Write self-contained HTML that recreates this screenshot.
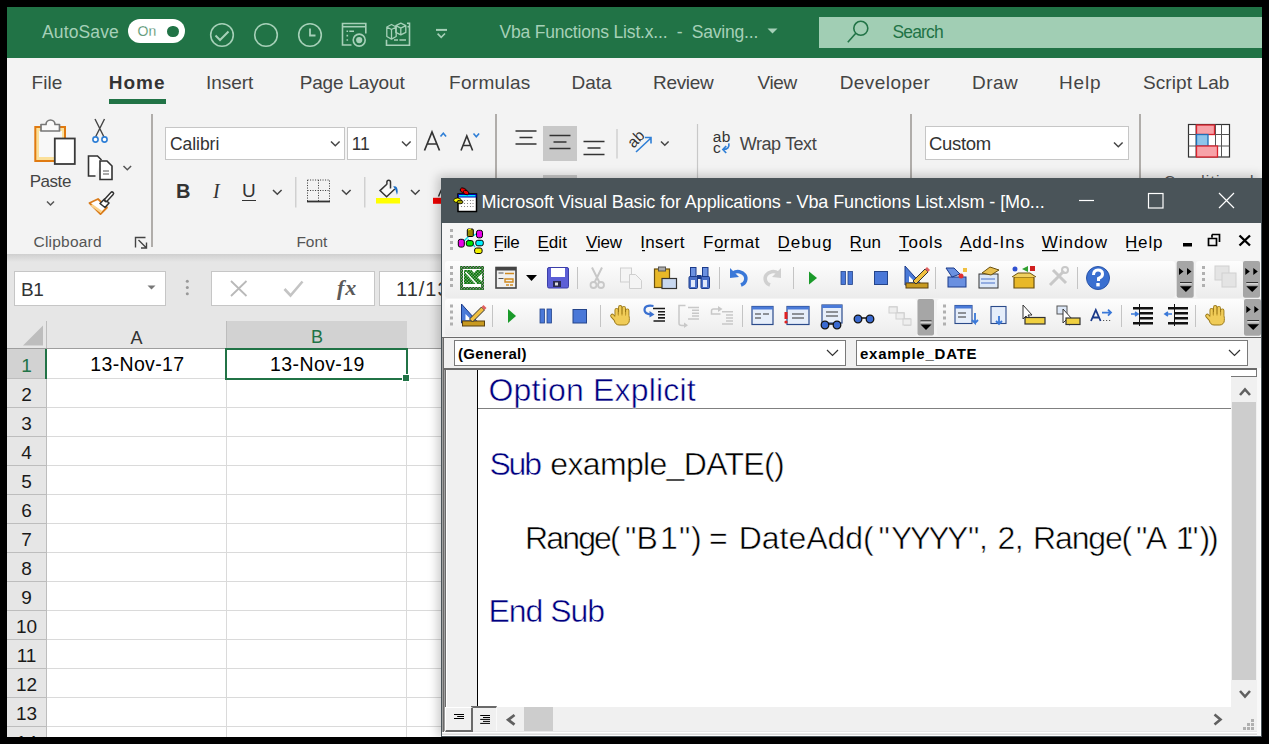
<!DOCTYPE html>
<html><head><meta charset="utf-8"><style>
html,body{margin:0;padding:0;}
body{width:1269px;height:744px;position:relative;overflow:hidden;background:#000;font-family:"Liberation Sans",sans-serif;}
.a{position:absolute;}
.t{position:absolute;white-space:pre;font-family:"Liberation Sans",sans-serif;}
svg{position:absolute;overflow:visible;}
</style></head><body>
<!-- Excel title bar -->
<div class="a" style="left:7px;top:7px;width:1255px;height:51px;background:#217346"></div>
<div class="a" style="left:128px;top:19px;width:57px;height:24px;border-radius:12px;background:#fff"></div>
<div class="a" style="left:167px;top:25.5px;width:11.5px;height:11.5px;border-radius:50%;background:#217346"></div>
<svg class="a" style="left:0;top:0" width="1269" height="60" fill="none" stroke="#a6d0b8" stroke-width="1.6">
  <circle cx="222" cy="35" r="11.3"/>
  <path d="M215.5 35.5 l4.5 4.5 l8.5 -8.5" stroke-width="2"/>
  <circle cx="266" cy="35" r="11.3"/>
  <circle cx="310" cy="35" r="11.3"/>
  <path d="M310 28.5 v7 h5.5" stroke-width="1.8"/>
  <!-- icon 4 -->
  <path d="M351.5 45 h-9 v-21.5 h23.3 v10"/>
  <path d="M342.5 26.7 h23.3"/>
  <path d="M346.5 31.2 h1.6 M346.5 35.6 h1.6 M346.5 40 h1.6 M349.3 31.2 h4.7" stroke-width="1.6"/>
  <circle cx="359.2" cy="40.1" r="6"/>
  <circle cx="359.2" cy="40.1" r="3.1" fill="#a6d0b8" stroke="none"/>
  <!-- icon 5 -->
  <path d="M386.5 39.8 v5.5 h23 v-22 h-2.5 M407.5 26.8 h2"/>
  <path d="M386.8 27 l4.7 -2.5 l4.7 2.5 v9.5 l-4.7 2.6 l-4.7 -2.6 z M391.5 29.5 v9.6 M386.8 27 l4.7 2.5 l4.7 -2.5" stroke-width="1.3" stroke-linejoin="round"/>
  <path d="M395.8 25.7 l5 -2.5 l5 2.5 v6.7 l-5 2.4 l-5 -2.4 z M400.8 28.2 v6.6 M395.8 25.7 l5 2.5 l5 -2.5" stroke-width="1.3" stroke-linejoin="round"/>
  <path d="M394 40 h4 M399.4 40 h6.6" stroke-width="1.4"/>
  <!-- customize qat -->
  <path d="M436 29.9 h11" stroke-width="2"/>
  <path d="M437.6 33.6 l3.6 3.8 l3.8 -3.9" stroke-width="1.6"/>
</svg>
<svg class="a" style="left:0;top:0" width="1269" height="60">
  <path d="M767.5 28.5 h10 l-5 5 z" fill="#a6d0b8"/>
</svg>
<div class="a" style="left:819px;top:17px;width:443px;height:31px;background:#a1ceb4"></div>
<svg class="a" style="left:0;top:0" width="1269" height="60" fill="none" stroke="#217346" stroke-width="1.6">
  <circle cx="860.8" cy="28.3" r="7"/>
  <path d="M855.8 33.3 l-8 9"/>
</svg>
<div class="a" style="left:1250px;top:17px;width:12px;height:6px;"></div>

<!-- Ribbon -->
<div class="a" style="left:7px;top:58px;width:1255px;height:196px;background:#f3f3f3"></div>
<div class="a" style="left:109px;top:99px;width:57px;height:4.5px;background:#217346"></div>
<!-- group separators -->
<div class="a" style="left:151px;top:114px;width:2px;height:133px;background:#b0adaa"></div>
<div class="a" style="left:494.8px;top:114px;width:2px;height:133px;background:#b0adaa"></div>
<div class="a" style="left:910px;top:114px;width:2px;height:133px;background:#b0adaa"></div>
<div class="a" style="left:1139.2px;top:114px;width:2px;height:133px;background:#b0adaa"></div>

<!-- clipboard icons -->
<svg class="a" style="left:0;top:100px" width="160" height="160" viewBox="0 100 160 160">
  <rect x="35.3" y="127" width="29.7" height="34" fill="#fbe09a" stroke="#e07a10" stroke-width="2"/>
  <rect x="39" y="131" width="23" height="26" fill="#f8f8f8"/>
  <path d="M41 131 v-6.5 h5 a4.5 4.5 0 0 1 9 0 h4.5 v6.5 z" fill="#fafafa" stroke="#777" stroke-width="1.7" stroke-linejoin="round"/>
  <rect x="54.8" y="138.5" width="20" height="25.5" fill="#fff" stroke="#3a3a3a" stroke-width="1.8"/>
  <path d="M47 201.5 l3.5 3.5 l3.5 -3.5" fill="none" stroke="#555" stroke-width="1.5"/>
  <!-- scissors -->
  <path d="M95 119 l9 18 M104.5 119 l-9 18" stroke="#444" stroke-width="1.4" fill="none"/>
  <circle cx="95.5" cy="139.5" r="2.6" fill="#fff" stroke="#2f7fd6" stroke-width="1.6"/>
  <circle cx="104.5" cy="139.5" r="2.6" fill="#fff" stroke="#2f7fd6" stroke-width="1.6"/>
  <!-- copy -->
  <path d="M95.5 176 h-7 v-20 h9 l4 4" fill="#fff" stroke="#333" stroke-width="1.6"/>
  <path d="M100 161 h7 l5 5 v13.5 h-12 z" fill="#fff" stroke="#333" stroke-width="1.6"/>
  <path d="M103 171 h6 M103 174 h6" stroke="#555" stroke-width="1"/>
  <path d="M123.5 166 l3.8 3.8 l3.8 -3.8" fill="none" stroke="#555" stroke-width="1.5"/>
  <!-- format painter -->
  <path d="M89.5 203 l8.5 -4 l9 8.5 l-6.5 6.5 z" fill="#fff" stroke="#d97b1a" stroke-width="1.8" stroke-linejoin="round"/>
  <path d="M93 206 l8.5 5.5 l-1 1.5 z" fill="#fbd28a" stroke="none"/>
  <path d="M91.5 205 l10 7" stroke="#fbd28a" stroke-width="2.5"/>
  <path d="M100 203.5 l4.5 -4.5 l4.5 4 l-4 4.5 z" fill="#fff" stroke="#333" stroke-width="1.6" stroke-linejoin="round"/>
  <path d="M106 200 l6 -6.5" stroke="#333" stroke-width="4.6" stroke-linecap="round"/>
  <path d="M106.3 199.7 l5.7 -6.2" stroke="#fff" stroke-width="1.6" stroke-linecap="round"/>
  <!-- launcher -->
  <path d="M135.5 247.5 v-10 h10 M138.5 240 l8 8 M141 248 h5.5 v-5.5" fill="none" stroke="#444" stroke-width="1.4"/>
</svg>

<!-- font group -->
<div class="a" style="left:165px;top:126.5px;width:178px;height:31.5px;background:#fff;border:1.5px solid #c6c6c6"></div>
<div class="a" style="left:346.5px;top:126.5px;width:68px;height:31.5px;background:#fff;border:1.5px solid #c6c6c6"></div>
<svg class="a" style="left:0;top:100px" width="500" height="160" viewBox="0 100 500 160" fill="none" stroke="#444" stroke-width="1.5">
  <path d="M331 141.5 l4.3 4.3 l4.3 -4.3"/>
  <path d="M402 141.5 l4.3 4.3 l4.3 -4.3"/>
  <path d="M424.5 150.5 l7.5 -18.5 l7.5 18.5 M427.5 144 h9" stroke="#333" stroke-width="1.7"/>
  <path d="M440.5 136.5 l2.8 -3.3 l2.8 3.3" stroke="#2f7fd6" stroke-width="1.6"/>
  <path d="M461 150.5 l5.8 -14.5 l5.8 14.5 M463.3 145.5 h7" stroke="#333" stroke-width="1.6"/>
  <path d="M473.5 133.5 l2.8 3.3 l2.8 -3.3" stroke="#2f7fd6" stroke-width="1.6"/>
  <path d="M273 190 l4.3 4.3 l4.3 -4.3"/>
  <path d="M342 190 l4.3 4.3 l4.3 -4.3"/>
  <path d="M411 190 l4.3 4.3 l4.3 -4.3"/>
  <path d="M295.8 177 v30.5 M364.8 177 v30.5" stroke="#c8c8c8" stroke-width="1.2"/>
  <!-- borders icon -->
  <path d="M307.5 180 h22 v21 M307.5 180 v21 M318.5 180 v21 M307.5 190.5 h22" stroke="#444" stroke-width="1" stroke-dasharray="1.1 1.4"/>
  <path d="M307 201.5 h23" stroke="#333" stroke-width="1.8"/>
  <!-- fill icon -->
  <path d="M386.8 184.2 L380 190.6 L386.6 196.8 L394.8 189" fill="#fafafa" stroke="#333" stroke-width="1.5" stroke-linejoin="miter"/>
  <path d="M390.5 188.6 V182.3 q0 -2 -1.8 -2 q-1.8 0 -1.8 2 V184.5" fill="none" stroke="#333" stroke-width="1.5"/>
  <path d="M393.2 186.3 q4.5 -1 4.5 5 q0 2 -0.8 3.5 q-0.4 -4.5 -3.7 -8.5 z" fill="#1d6fc7" stroke="none"/>
  <path d="M438.5 196.5 l3 -7" stroke="#333" stroke-width="1.5"/>
  <rect x="376" y="198" width="24" height="5.5" fill="#ffff00" stroke="none"/>
  <rect x="433" y="197.8" width="9" height="6" fill="#f00000" stroke="none"/>
</svg>
<!-- B I U -->
<div class="t" style="left:176px;top:180.5px;font-size:20px;line-height:20px;font-weight:bold;color:#333">B</div>
<div class="t" style="left:213px;top:180.5px;font-size:20px;line-height:20px;font-style:italic;color:#333;font-family:'Liberation Serif'">I</div>
<div class="t" style="left:242px;top:180.5px;font-size:19px;line-height:20px;color:#333">U</div>
<div class="a" style="left:242px;top:199.5px;width:14px;height:1.5px;background:#333"></div>

<!-- alignment group -->
<div class="a" style="left:543px;top:126px;width:34px;height:35px;background:#c8c8c8"></div>
<div class="a" style="left:543px;top:175px;width:34px;height:4px;background:#c8c8c8"></div>
<svg class="a" style="left:480px;top:100px" width="440" height="100" viewBox="480 100 440 100" fill="none" stroke="#333" stroke-width="1.6">
  <path d="M515.5 131 h21 M519.5 137.5 h13 M515.5 144 h21"/>
  <path d="M549.5 135.5 h21 M553.5 142 h13 M549.5 148.5 h21"/>
  <path d="M583.5 141.5 h21 M587.5 148 h13 M583.5 154.5 h21"/>
  <path d="M617 129 v29.5" stroke="#c8c8c8" stroke-width="1.2"/>
  <path d="M697.5 124 v54" stroke="#c8c8c8" stroke-width="1.2"/>
  <path d="M636 152 l15 -14 M645 137.5 h6 v6" stroke="#2f7fd6" stroke-width="1.6"/>
  <path d="M661 141.5 l3.8 3.8 l3.8 -3.8" stroke="#444" stroke-width="1.5"/>
  <path d="M728.8 143.3 q1.2 6 -6 6.2 M726.2 146 l-3.3 3.5 l3.3 3.5" stroke="#2f7fd6" stroke-width="1.7"/>
</svg>
<div class="t" style="left:627px;top:131px;width:18px;height:16px;font-size:15.5px;line-height:16px;text-align:center;color:#333;transform:rotate(-45deg);transform-origin:9px 8px">ab</div>
<div class="t" style="left:712.8px;top:129.2px;font-size:15.5px;line-height:15.5px;color:#333;letter-spacing:0.3px">ab</div>
<div class="t" style="left:713px;top:140.1px;font-size:15.5px;line-height:15.5px;color:#333">c</div>

<!-- number group -->
<div class="a" style="left:924.5px;top:126px;width:202px;height:32px;background:#fff;border:1.5px solid #c6c6c6"></div>
<svg class="a" style="left:900px;top:100px" width="369" height="100" viewBox="900 100 369 100" fill="none" stroke="#444" stroke-width="1.5">
  <path d="M1114 142.5 l4.3 4.3 l4.3 -4.3"/>
  <!-- conditional formatting icon -->
  <rect x="1188.5" y="124.5" width="41" height="32.5" stroke="#333" stroke-width="1.2" fill="#fff"/>
  <path d="M1188.5 134.5 h41 M1188.5 146 h41 M1196 124.5 v32.5 M1215.5 124.5 v32.5 M1221.5 124.5 v32.5" stroke="#555" stroke-width="1"/>
  <rect x="1196.5" y="125" width="18" height="9.5" fill="#f7a2a8" stroke="#d9232d" stroke-width="1.3"/>
  <rect x="1196.5" y="134.5" width="11.5" height="11.5" fill="#8ec4ea" stroke="#1e6fb6" stroke-width="1.3"/>
  <rect x="1196.5" y="146" width="21" height="11" fill="#f7a2a8" stroke="#d9232d" stroke-width="1.3"/>
</svg>

<!-- shadow band + formula area -->
<div class="a" style="left:7px;top:254px;width:1255px;height:483px;background:#e6e6e6"></div>
<div class="a" style="left:7px;top:254px;width:1255px;height:8px;background:linear-gradient(#cfcfcf,#e6e6e6)"></div>
<div class="a" style="left:14px;top:271px;width:150px;height:33px;background:#fff;border:1px solid #c6c6c6"></div>
<svg class="a" style="left:0;top:260px" width="441" height="60" viewBox="0 260 441 60">
  <path d="M147.5 285.5 h8 l-4 4 z" fill="#777"/>
  <circle cx="187.3" cy="281.3" r="1.5" fill="#999"/>
  <circle cx="187.3" cy="287.5" r="1.5" fill="#999"/>
  <circle cx="187.3" cy="293.7" r="1.5" fill="#999"/>
</svg>
<div class="a" style="left:211px;top:271px;width:162px;height:33px;background:#fff;border:1px solid #c6c6c6"></div>
<div class="a" style="left:379px;top:271px;width:100px;height:33px;background:#fff;border:1px solid #c6c6c6"></div>
<svg class="a" style="left:0;top:260px" width="441" height="60" viewBox="0 260 441 60" fill="none">
  <path d="M231 281 l15.5 15 M246.5 281 l-15.5 15" stroke="#b9b9b9" stroke-width="1.8"/>
  <path d="M284.5 289 l6 6.5 l12 -14" stroke="#c4c4c4" stroke-width="2.6"/>
</svg>
<div class="t" style="left:337px;top:276.5px;font-size:22px;line-height:22px;font-style:italic;font-weight:bold;color:#5a5a5a;font-family:'Liberation Serif';letter-spacing:1px">fx</div>

<!-- grid -->
<div class="a" style="left:46px;top:349px;width:1216px;height:388px;background:#fff"></div>
<div class="a" style="left:46px;top:378.00px;width:400px;height:1px;background:#dadada"></div>
<div class="a" style="left:7px;top:378.00px;width:39px;height:1px;background:#bdbdbd"></div>
<div class="a" style="left:46px;top:407.03px;width:400px;height:1px;background:#dadada"></div>
<div class="a" style="left:7px;top:407.03px;width:39px;height:1px;background:#bdbdbd"></div>
<div class="a" style="left:46px;top:436.06px;width:400px;height:1px;background:#dadada"></div>
<div class="a" style="left:7px;top:436.06px;width:39px;height:1px;background:#bdbdbd"></div>
<div class="a" style="left:46px;top:465.09px;width:400px;height:1px;background:#dadada"></div>
<div class="a" style="left:7px;top:465.09px;width:39px;height:1px;background:#bdbdbd"></div>
<div class="a" style="left:46px;top:494.12px;width:400px;height:1px;background:#dadada"></div>
<div class="a" style="left:7px;top:494.12px;width:39px;height:1px;background:#bdbdbd"></div>
<div class="a" style="left:46px;top:523.15px;width:400px;height:1px;background:#dadada"></div>
<div class="a" style="left:7px;top:523.15px;width:39px;height:1px;background:#bdbdbd"></div>
<div class="a" style="left:46px;top:552.18px;width:400px;height:1px;background:#dadada"></div>
<div class="a" style="left:7px;top:552.18px;width:39px;height:1px;background:#bdbdbd"></div>
<div class="a" style="left:46px;top:581.21px;width:400px;height:1px;background:#dadada"></div>
<div class="a" style="left:7px;top:581.21px;width:39px;height:1px;background:#bdbdbd"></div>
<div class="a" style="left:46px;top:610.24px;width:400px;height:1px;background:#dadada"></div>
<div class="a" style="left:7px;top:610.24px;width:39px;height:1px;background:#bdbdbd"></div>
<div class="a" style="left:46px;top:639.27px;width:400px;height:1px;background:#dadada"></div>
<div class="a" style="left:7px;top:639.27px;width:39px;height:1px;background:#bdbdbd"></div>
<div class="a" style="left:46px;top:668.30px;width:400px;height:1px;background:#dadada"></div>
<div class="a" style="left:7px;top:668.30px;width:39px;height:1px;background:#bdbdbd"></div>
<div class="a" style="left:46px;top:697.33px;width:400px;height:1px;background:#dadada"></div>
<div class="a" style="left:7px;top:697.33px;width:39px;height:1px;background:#bdbdbd"></div>
<div class="a" style="left:46px;top:726.36px;width:400px;height:1px;background:#dadada"></div>
<div class="a" style="left:7px;top:726.36px;width:39px;height:1px;background:#bdbdbd"></div>
<div class="a" style="left:46px;top:755.39px;width:400px;height:1px;background:#dadada"></div>
<div class="a" style="left:7px;top:755.39px;width:39px;height:1px;background:#bdbdbd"></div>
<div class="a" style="left:226px;top:349px;width:1px;height:390px;background:#dadada"></div>
<div class="a" style="left:226px;top:321px;width:1px;height:28px;background:#bdbdbd"></div>
<div class="a" style="left:406px;top:349px;width:1px;height:390px;background:#dadada"></div>
<div class="a" style="left:406px;top:321px;width:1px;height:28px;background:#bdbdbd"></div>
<div class="a" style="left:46px;top:321px;width:1px;height:420px;background:#bdbdbd"></div>
<div class="a" style="left:7px;top:348px;width:440px;height:1px;background:#9e9e9e"></div>
<div class="a" style="left:226.5px;top:321px;width:180px;height:27px;background:#d2d2d2"></div>
<div class="a" style="left:226px;top:347.5px;width:181px;height:2px;background:#217346"></div>
<div class="a" style="left:7px;top:349px;width:39px;height:29px;background:#d2d2d2"></div>
<div class="a" style="left:45px;top:349px;width:2px;height:29.5px;background:#217346"></div>
<div class="a" style="left:225px;top:348px;width:179px;height:28px;border:2px solid #217346"></div>
<div class="a" style="left:402px;top:374px;width:6px;height:6px;background:#217346;border:1px solid #fff"></div>
<svg class="a" style="left:0;top:0" width="441" height="744">
  <path d="M23 345.5 h20 v-20 z" fill="#bdbdbd"/>
</svg>

<div class="t" style="left:42.00px;top:23.69px;font-size:17.5px;line-height:17.5px;font-weight:normal;letter-spacing:0.121px;color:#a6d0b8;">AutoSave</div>
<div class="t" style="left:137.50px;top:24.15px;font-size:14px;line-height:14px;font-weight:normal;letter-spacing:0.000px;color:#217346;-webkit-text-stroke:0.35px #fff;">On</div>
<div class="t" style="left:499.40px;top:24.19px;font-size:17.5px;line-height:17.5px;font-weight:normal;letter-spacing:-0.183px;color:#a6d0b8;">Vba Functions List.x...  -  Saving...</div>
<div class="t" style="left:892.40px;top:24.19px;font-size:17.5px;line-height:17.5px;font-weight:normal;letter-spacing:-0.823px;color:#217346;">Search</div>
<div class="t" style="left:31.50px;top:73.42px;font-size:19px;line-height:19px;font-weight:normal;letter-spacing:0.084px;color:#444444;">File</div>
<div class="t" style="left:206.00px;top:73.42px;font-size:19px;line-height:19px;font-weight:normal;letter-spacing:-0.048px;color:#444444;">Insert</div>
<div class="t" style="left:299.70px;top:73.42px;font-size:19px;line-height:19px;font-weight:normal;letter-spacing:-0.172px;color:#444444;">Page Layout</div>
<div class="t" style="left:449.00px;top:73.42px;font-size:19px;line-height:19px;font-weight:normal;letter-spacing:0.303px;color:#444444;">Formulas</div>
<div class="t" style="left:571.50px;top:73.42px;font-size:19px;line-height:19px;font-weight:normal;letter-spacing:-0.022px;color:#444444;">Data</div>
<div class="t" style="left:653.00px;top:73.42px;font-size:19px;line-height:19px;font-weight:normal;letter-spacing:-0.315px;color:#444444;">Review</div>
<div class="t" style="left:757.50px;top:73.42px;font-size:19px;line-height:19px;font-weight:normal;letter-spacing:-0.339px;color:#444444;">View</div>
<div class="t" style="left:839.70px;top:73.42px;font-size:19px;line-height:19px;font-weight:normal;letter-spacing:0.440px;color:#444444;">Developer</div>
<div class="t" style="left:972.00px;top:73.42px;font-size:19px;line-height:19px;font-weight:normal;letter-spacing:0.462px;color:#444444;">Draw</div>
<div class="t" style="left:1059.00px;top:73.42px;font-size:19px;line-height:19px;font-weight:normal;letter-spacing:0.830px;color:#444444;">Help</div>
<div class="t" style="left:1143.00px;top:73.42px;font-size:19px;line-height:19px;font-weight:normal;letter-spacing:0.091px;color:#444444;">Script Lab</div>
<div class="t" style="left:108.70px;top:73.42px;font-size:19px;line-height:19px;font-weight:bold;letter-spacing:1.026px;color:#333;">Home</div>
<div class="t" style="left:29.70px;top:172.61px;font-size:17px;line-height:17px;font-weight:normal;letter-spacing:-0.454px;color:#444;">Paste</div>
<div class="t" style="left:33.50px;top:233.88px;font-size:15.5px;line-height:15.5px;font-weight:normal;letter-spacing:0.222px;color:#555;">Clipboard</div>
<div class="t" style="left:170.00px;top:135.69px;font-size:17.5px;line-height:17.5px;font-weight:normal;letter-spacing:-0.051px;color:#333;">Calibri</div>
<div class="t" style="left:351.70px;top:135.69px;font-size:17.5px;line-height:17.5px;font-weight:normal;letter-spacing:-0.134px;color:#333;">11</div>
<div class="t" style="left:296.50px;top:233.88px;font-size:15.5px;line-height:15.5px;font-weight:normal;letter-spacing:-0.103px;color:#555;">Font</div>
<div class="t" style="left:739.70px;top:135.46px;font-size:18px;line-height:18px;font-weight:normal;letter-spacing:-0.424px;color:#444;">Wrap Text</div>
<div class="t" style="left:929.00px;top:135.34px;font-size:18.5px;line-height:18.5px;font-weight:normal;letter-spacing:-0.326px;color:#333;">Custom</div>
<div class="t" style="left:1164.00px;top:172.88px;font-size:15.5px;line-height:15.5px;font-weight:normal;letter-spacing:1.189px;color:#555;">Conditional</div>
<div class="t" style="left:21.00px;top:279.92px;font-size:19px;line-height:19px;font-weight:normal;letter-spacing:-0.373px;color:#333;">B1</div>
<div class="t" style="left:396.00px;top:279.07px;font-size:20px;line-height:20px;font-weight:normal;letter-spacing:0.000px;color:#333;letter-spacing:1px">11/13</div>
<div class="t" style="left:130.50px;top:328.66px;font-size:18px;line-height:18px;font-weight:normal;letter-spacing:0.000px;color:#333;">A</div>
<div class="t" style="left:311.00px;top:328.16px;font-size:18px;line-height:18px;font-weight:normal;letter-spacing:0.000px;color:#217346;">B</div>
<div class="t" style="left:90.30px;top:355.49px;font-size:19.5px;line-height:19.5px;font-weight:normal;letter-spacing:0.338px;color:#000;">13-Nov-17</div>
<div class="t" style="left:270.00px;top:355.49px;font-size:19.5px;line-height:19.5px;font-weight:normal;letter-spacing:0.413px;color:#000;">13-Nov-19</div>
<div class="t" style="left:7px;width:39px;text-align:center;top:355.92px;font-size:19px;line-height:19px;color:#217346">1</div>
<div class="t" style="left:7px;width:39px;text-align:center;top:384.95px;font-size:19px;line-height:19px;color:#1a1a1a">2</div>
<div class="t" style="left:7px;width:39px;text-align:center;top:413.98px;font-size:19px;line-height:19px;color:#1a1a1a">3</div>
<div class="t" style="left:7px;width:39px;text-align:center;top:443.01px;font-size:19px;line-height:19px;color:#1a1a1a">4</div>
<div class="t" style="left:7px;width:39px;text-align:center;top:472.04px;font-size:19px;line-height:19px;color:#1a1a1a">5</div>
<div class="t" style="left:7px;width:39px;text-align:center;top:501.07px;font-size:19px;line-height:19px;color:#1a1a1a">6</div>
<div class="t" style="left:7px;width:39px;text-align:center;top:530.10px;font-size:19px;line-height:19px;color:#1a1a1a">7</div>
<div class="t" style="left:7px;width:39px;text-align:center;top:559.13px;font-size:19px;line-height:19px;color:#1a1a1a">8</div>
<div class="t" style="left:7px;width:39px;text-align:center;top:588.16px;font-size:19px;line-height:19px;color:#1a1a1a">9</div>
<div class="t" style="left:7px;width:39px;text-align:center;top:617.19px;font-size:19px;line-height:19px;color:#1a1a1a">10</div>
<div class="t" style="left:7px;width:39px;text-align:center;top:646.22px;font-size:19px;line-height:19px;color:#1a1a1a">11</div>
<div class="t" style="left:7px;width:39px;text-align:center;top:675.25px;font-size:19px;line-height:19px;color:#1a1a1a">12</div>
<div class="t" style="left:7px;width:39px;text-align:center;top:704.28px;font-size:19px;line-height:19px;color:#1a1a1a">13</div>
<div class="t" style="left:7px;width:39px;text-align:center;top:733.31px;font-size:19px;line-height:19px;color:#1a1a1a">14</div>
<!-- VBA window -->
<div class="a" style="left:441px;top:178px;width:821px;height:559px;background:#f0f0f0;box-shadow:-2px -1px 10px 1px rgba(0,0,0,0.22)"></div>
<div class="a" style="left:441px;top:178px;width:821px;height:45px;background:#4a5459"></div>
<div class="a" style="left:441px;top:223px;width:1px;height:514px;background:#4a5459"></div>
<!-- menubar -->
<div class="a" style="left:442px;top:223px;width:819px;height:37px;background:#f5f5f5"></div>
<!-- toolbars background -->
<div class="a" style="left:442px;top:260px;width:819px;height:77px;background:#f3f3f3"></div>
<div class="a" style="left:445px;top:261px;width:730px;height:36.5px;background:linear-gradient(#fdfdfd,#ececec);border-radius:3px"></div>
<div class="a" style="left:1196px;top:261px;width:47px;height:36.5px;background:linear-gradient(#fdfdfd,#ececec);border-radius:3px"></div>
<div class="a" style="left:445px;top:299px;width:472px;height:37px;background:linear-gradient(#fdfdfd,#ececec);border-radius:3px"></div>
<div class="a" style="left:937px;top:299px;width:307px;height:37px;background:linear-gradient(#fdfdfd,#ececec);border-radius:3px"></div>
<div class="a" style="left:442px;top:336.5px;width:819px;height:1.5px;background:#6a6a6a"></div>
<!-- MDI child -->
<div class="a" style="left:442px;top:338px;width:1px;height:398px;background:#a0a0a0"></div>
<div class="a" style="left:443px;top:338px;width:1px;height:398px;background:#6a6a6a"></div>
<div class="a" style="left:444px;top:369px;width:1px;height:362px;background:#a0a0a0"></div>
<div class="a" style="left:454px;top:340px;width:390px;height:23.5px;background:#fff;border:1px solid #7a7a7a"></div>
<div class="a" style="left:856px;top:340px;width:390px;height:23.5px;background:#fff;border:1px solid #7a7a7a"></div>
<div class="a" style="left:444px;top:368.3px;width:813.5px;height:1.6px;background:#6a6a6a"></div>
<div class="a" style="left:445px;top:369.9px;width:1px;height:361px;background:#6a6a6a"></div>
<div class="a" style="left:446px;top:370px;width:31px;height:336.5px;background:#f0f0f0;border-left:1px solid #fff;box-sizing:border-box"></div>
<div class="a" style="left:477px;top:370px;width:1px;height:336.5px;background:#000"></div>
<div class="a" style="left:478px;top:370px;width:753px;height:336.5px;background:#fff"></div>
<div class="a" style="left:478px;top:407.8px;width:753px;height:1.2px;background:#808080"></div>
<!-- vscroll -->
<div class="a" style="left:1231px;top:377px;width:25.5px;height:330px;background:#f0f0f0"></div>
<div class="a" style="left:1231px;top:370px;width:25px;height:5.5px;background:#fff;border-right:1px solid #777;border-bottom:1.5px solid #777"></div>
<div class="a" style="left:1232px;top:402.4px;width:24px;height:277.5px;background:#cdcdcd"></div>
<!-- hscroll -->
<div class="a" style="left:446px;top:706.5px;width:811px;height:24.9px;background:#f0f0f0"></div>
<div class="a" style="left:524px;top:707.1px;width:29px;height:23.7px;background:#cdcdcd"></div>
<div class="a" style="left:471px;top:706px;width:26px;height:25px;border-left:2px solid #6a6a6a;border-top:2px solid #6a6a6a;border-right:1px solid #fafafa;background:#f0f0f0;box-sizing:border-box"></div>
<div class="a" style="left:445px;top:707px;width:28px;height:25px;border-right:2px solid #6a6a6a;border-bottom:2px solid #6a6a6a;border-left:1px solid #fff;border-top:1px solid #fff;background:#f0f0f0;box-sizing:border-box"></div>
<div class="a" style="left:473px;top:731px;width:788px;height:1px;background:#e6e6e6"></div>
<div class="a" style="left:442px;top:732px;width:819px;height:1px;background:#fff"></div>
<div class="a" style="left:442px;top:733px;width:819px;height:1px;background:#eaeaea"></div>
<div class="a" style="left:442px;top:734px;width:819px;height:1px;background:#dcdcdc"></div>
<div class="a" style="left:442px;top:735px;width:819px;height:1px;background:#fff"></div>
<div class="a" style="left:441px;top:736px;width:821px;height:1px;background:#4a5459"></div>
<div class="a" style="left:1257px;top:368px;width:4px;height:368px;background:#f8f8f8;border-right:1px solid #fff;box-sizing:border-box"></div>
<div class="a" style="left:1261px;top:178px;width:1px;height:559px;background:#4a5459"></div>

<svg class="a" style="left:0;top:0" width="1269" height="744">
  <!-- title icon -->
  <rect x="458" y="194" width="18.5" height="17.5" fill="#fff" stroke="#000" stroke-width="1.5"/>
  <rect x="458.5" y="194.5" width="17.5" height="2.5" fill="#00e6ff" stroke="#0000b0" stroke-width="1"/>
  <g fill="#777"><circle cx="461.5" cy="200.5" r=".6"/><circle cx="464.5" cy="200.5" r=".6"/><circle cx="467.5" cy="200.5" r=".6"/><circle cx="470.5" cy="200.5" r=".6"/><circle cx="473" cy="200.5" r=".6"/>
  <circle cx="461.5" cy="203.5" r=".6"/><circle cx="464.5" cy="203.5" r=".6"/><circle cx="467.5" cy="203.5" r=".6"/><circle cx="470.5" cy="203.5" r=".6"/><circle cx="473" cy="203.5" r=".6"/>
  <circle cx="461.5" cy="206.5" r=".6"/><circle cx="464.5" cy="206.5" r=".6"/><circle cx="467.5" cy="206.5" r=".6"/><circle cx="470.5" cy="206.5" r=".6"/><circle cx="473" cy="206.5" r=".6"/></g>
  <ellipse cx="463.5" cy="190.5" rx="3.5" ry="2.3" fill="#e00" stroke="#000" stroke-width=".8" transform="rotate(25 463.5 190.5)"/>
  <ellipse cx="466" cy="192.5" rx="3" ry="2" fill="#e00" stroke="#000" stroke-width=".8" transform="rotate(25 466 192.5)"/>
  <ellipse cx="457.5" cy="200.3" rx="3.8" ry="2.3" fill="#ff0" stroke="#000" stroke-width=".8"/>
  <ellipse cx="460" cy="202" rx="3" ry="1.8" fill="#990" stroke="#000" stroke-width=".8"/>
  <!-- window buttons -->
  <path d="M1079 200.5 h15" stroke="#fff" stroke-width="1.2"/>
  <rect x="1148.5" y="193.5" width="14.5" height="14.5" fill="none" stroke="#fff" stroke-width="1.2"/>
  <path d="M1219 193 l15 15 M1234 193 l-15 15" stroke="#fff" stroke-width="1.2"/>
  <!-- menubar grip -->
  <g fill="#b0b0b0"><rect x="450" y="229" width="3" height="3"/><rect x="450" y="235" width="3" height="3"/><rect x="450" y="241" width="3" height="3"/><rect x="450" y="247" width="3" height="3"/></g>
  <!-- vba menu icon -->
  <path d="M463 242 l7 -7 M473 236 l6 -4 M472 243 l3 4 M470 243 l-2 -4" stroke="#00d8e8" stroke-width="1.3" fill="none"/>
  <rect x="467.3" y="229" width="6" height="7.5" rx="1" fill="#988800" stroke="#000" stroke-width="1"/>
  <path d="M468 230 l3 -1" stroke="#ff0" stroke-width="1.2"/>
  <rect x="476.5" y="230.3" width="6" height="7.5" rx="2" fill="#e800e8" stroke="#000" stroke-width="1"/>
  <rect x="458.3" y="239.3" width="6" height="7.8" rx="2" fill="#e800e8" stroke="#000" stroke-width="1"/>
  <rect x="466.3" y="240.6" width="7" height="5.5" rx="2" fill="#00e800" stroke="#000" stroke-width="1"/>
  <rect x="475.8" y="240.3" width="7.5" height="5.5" rx="2" fill="#00f0ff" stroke="#000" stroke-width="1"/>
  <rect x="474.6" y="248" width="7.5" height="5.5" rx="2" fill="#f0f000" stroke="#000" stroke-width="1"/>
  <!-- MDI buttons -->
  <rect x="1183" y="243" width="9" height="3.5" fill="#000"/>
  <path d="M1212 234.5 h7.5 v7.5 M1212 234.5 v3 M1208.5 238.5 h8 v7 h-8 z" fill="none" stroke="#000" stroke-width="1.7"/>
  <path d="M1239.5 235.5 l10.5 10 M1250 235.5 l-10.5 10" stroke="#000" stroke-width="2.4"/>
  <!-- menu underlines -->
  <g fill="#000">
    <rect x="495" y="250" width="8" height="1.2"/>
    <rect x="539" y="250" width="10" height="1.2"/>
    <rect x="586" y="250" width="12" height="1.2"/>
    <rect x="642" y="250" width="3" height="1.2"/>
    <rect x="715" y="250" width="10" height="1.2"/>
    <rect x="779" y="250" width="12" height="1.2"/>
    <rect x="851" y="250" width="11" height="1.2"/>
    <rect x="899" y="250" width="10" height="1.2"/>
    <rect x="960" y="250" width="12" height="1.2"/>
    <rect x="1042" y="250" width="16" height="1.2"/>
    <rect x="1127" y="250" width="12" height="1.2"/>
  </g>
  <!-- toolbar grips -->
  <g fill="#b0b0b0">
    <rect x="450" y="266" width="3" height="3"/><rect x="450" y="272" width="3" height="3"/><rect x="450" y="278" width="3" height="3"/><rect x="450" y="284" width="3" height="3"/>
    <rect x="450" y="304.5" width="3" height="3"/><rect x="450" y="310.5" width="3" height="3"/><rect x="450" y="316.5" width="3" height="3"/><rect x="450" y="322.5" width="3" height="3"/>
    <rect x="1202" y="266" width="3" height="3"/><rect x="1202" y="272" width="3" height="3"/><rect x="1202" y="278" width="3" height="3"/><rect x="1202" y="284" width="3" height="3"/>
    <rect x="943" y="304.5" width="3" height="3"/><rect x="943" y="310.5" width="3" height="3"/><rect x="943" y="316.5" width="3" height="3"/><rect x="943" y="322.5" width="3" height="3"/>
  </g>
  <!-- separators -->
  <g fill="#c4c4c4">
    <rect x="577" y="267" width="1" height="22"/><rect x="719" y="267" width="1" height="22"/><rect x="793" y="267" width="1" height="22"/><rect x="935" y="267" width="1" height="22"/><rect x="1077" y="267" width="1" height="22"/>
    <rect x="492" y="305" width="1" height="22"/><rect x="600" y="305" width="1" height="22"/><rect x="742" y="305" width="1" height="22"/><rect x="1121" y="305" width="1" height="22"/><rect x="1195" y="305" width="1" height="22"/>
  </g>
  <!-- overflow buttons -->
  <g id="ovf">
    <rect x="1176.7" y="261" width="17" height="36.7" rx="2" fill="#a6a6a6"/>
    <path d="M1179 268 l4.5 3.5 l-4.5 3.5 z M1187 268 l4.5 3.5 l-4.5 3.5 z" fill="#000"/>
    <rect x="1180" y="282.3" width="11.8" height="1" fill="#000"/><rect x="1180" y="283.3" width="11.8" height="1" fill="#fff"/>
    <path d="M1180 286.2 h11.8 l-5.9 5.8 z" fill="#000"/>
  </g>
  <use href="#ovf" x="66.3" y="0"/>
  <use href="#ovf" x="67.3" y="38"/>
  <rect x="917.5" y="299" width="16.5" height="36.5" rx="2" fill="#a6a6a6"/>
  <rect x="920.5" y="320.5" width="11" height="1" fill="#000"/><rect x="920.5" y="321.5" width="11" height="1" fill="#fff"/>
  <path d="M920.5 324.5 h11 l-5.5 5.5 z" fill="#000"/>

  <!-- toolbar 1 icons -->
  <defs><pattern id="chk" width="3" height="3" patternUnits="userSpaceOnUse"><rect width="3" height="3" fill="#9a7a9a"/><rect x="0" y="0" width="1.8" height="1.8" rx=".6" fill="#008000"/><rect x="1.5" y="1.5" width="1.8" height="1.8" rx=".6" fill="#008000"/></pattern>
  <pattern id="chk2" width="3" height="3" patternUnits="userSpaceOnUse"><rect width="3" height="3" fill="#70a870"/><rect x="0" y="0" width="1.7" height="1.7" rx=".5" fill="#007000"/><rect x="1.5" y="1.5" width="1.7" height="1.7" rx=".5" fill="#007000"/></pattern></defs>
  <rect x="460" y="266" width="24" height="24" fill="url(#chk)"/>
  <rect x="463" y="269" width="18" height="18" fill="#fff"/>
  <rect x="464" y="270" width="17.5" height="14" fill="url(#chk2)"/>
  <path d="M465.5 272 l11 12" stroke="#fff" stroke-width="1.6"/>
  <path d="M471 269.5 h6 l-3 3.5 z M482 273.5 v8 l-4.5 -4 z" fill="#fff"/>
  <rect x="496" y="267.5" width="20" height="20.5" fill="#f0f0f0" stroke="#444" stroke-width="1.6"/>
  <rect x="496" y="267.5" width="20" height="3" fill="#444"/>
  <path d="M498.5 273 h5 M498.5 278.5 h5" stroke="#555" stroke-width="1.2"/>
  <path d="M505 273.5 h9 M505 279 h8 v3 h-8 z M506 285 h3 M510 285 h3" stroke="#d08a20" stroke-width="1.4" fill="none"/>
  <path d="M526 275 h11 l-5.5 6 z" fill="#000"/>
  <rect x="547.5" y="267.5" width="21" height="20.5" rx="1.5" fill="#5c5fd6" stroke="#3b3ea8" stroke-width="1"/>
  <rect x="551" y="268" width="14" height="9" fill="#fff"/>
  <rect x="553" y="281" width="8" height="6" fill="#2a2a50"/>
  <rect x="555" y="282.5" width="3" height="3" fill="#ddd"/>
  <!-- cut disabled -->
  <path d="M592 267.5 l7.5 15 M602 267.5 l-7.5 15" stroke="#c8c8c8" stroke-width="2"/>
  <circle cx="593.5" cy="285" r="3" fill="none" stroke="#c8c8c8" stroke-width="1.8"/>
  <circle cx="601" cy="285" r="3" fill="none" stroke="#c8c8c8" stroke-width="1.8"/>
  <!-- copy disabled -->
  <rect x="620.5" y="268" width="11" height="14" fill="#f4f4f4" stroke="#cfcfcf" stroke-width="1"/>
  <path d="M629.5 274.5 h6 l6 6 v8 h-12 z" fill="#f4f4f4" stroke="#cfcfcf" stroke-width="1"/>
  <!-- paste -->
  <rect x="654.5" y="269" width="15" height="18.5" fill="#e8b828" stroke="#6a5010" stroke-width="1.2"/>
  <rect x="658.5" y="267" width="7" height="4" fill="#aaa" stroke="#555" stroke-width="1"/>
  <rect x="662" y="278.5" width="14.5" height="10" fill="#c8d8f0" stroke="#333" stroke-width="1.2"/>
  <!-- find -->
  <rect x="689" y="276.5" width="8.5" height="12" rx="1" fill="#4a70c8" stroke="#1a3a8a" stroke-width="1"/>
  <rect x="701" y="276.5" width="8.5" height="12" rx="1" fill="#4a70c8" stroke="#1a3a8a" stroke-width="1"/>
  <rect x="690.5" y="267.5" width="5.5" height="9" fill="#6a90e0" stroke="#1a3a8a" stroke-width="1"/>
  <rect x="702.5" y="267.5" width="5.5" height="9" fill="#6a90e0" stroke="#1a3a8a" stroke-width="1"/>
  <rect x="697" y="275" width="4.5" height="4" fill="#1a3a8a"/>
  <rect x="691" y="280" width="4" height="7" fill="#dfe8fa"/><rect x="703" y="280" width="4" height="7" fill="#dfe8fa"/>
  <!-- undo / redo -->
  <path d="M733 273 a8 7 0 1 1 8 12" fill="none" stroke="#3a78d8" stroke-width="3.5"/>
  <path d="M730 268 l0 10 l9 -1 z" fill="#3a78d8"/>
  <path d="M778 273 a8 7 0 1 0 -8 12" fill="none" stroke="#d0d0d0" stroke-width="3.5"/>
  <path d="M781 268 l0 10 l-9 -1 z" fill="#d0d0d0"/>
  <!-- run pause stop (row1) -->
  <path d="M809 271.5 l8 6.5 l-8 6.5 z" fill="#1a9a2a"/>
  <rect x="841" y="271.5" width="4.5" height="13" fill="#4a78d8" stroke="#24448a" stroke-width=".8"/>
  <rect x="848" y="271.5" width="4.5" height="13" fill="#4a78d8" stroke="#24448a" stroke-width=".8"/>
  <rect x="874.5" y="271.5" width="13" height="13" fill="#4a78d8" stroke="#24448a" stroke-width="1"/>
  <!-- design mode -->
  <g id="dsn">
    <path d="M905 266 v19 h17 z" fill="#4a7ad8" stroke="#1a3a8a" stroke-width="1"/>
    <path d="M909 276 v6 h6 z" fill="#fff"/>
    <rect x="906" y="283" width="22" height="5" fill="#c89a20" stroke="#5a4010" stroke-width="1"/>
    <path d="M913 281 l12 -12 l3 3 l-12 12 z" fill="#f0c040" stroke="#333" stroke-width="1"/>
    <path d="M925 269 l2 -2 l3 3 l-2 2 z" fill="#e06060"/>
  </g>
  <use href="#dsn" x="-443.5" y="38"/>
  <!-- project explorer -->
  <rect x="948" y="277" width="18" height="10" fill="#6a90e0" stroke="#1a3a8a" stroke-width="1"/>
  <path d="M946 268 l8 0 l6 6 l-8 3 z" fill="#6a90e0" stroke="#1a3a8a" stroke-width="1"/>
  <circle cx="961" cy="276" r="2.5" fill="#e03030"/><rect x="963" y="268" width="4" height="4" fill="#f0c040"/>
  <!-- properties -->
  <rect x="979" y="274" width="19" height="14" fill="#dde8f8" stroke="#333" stroke-width="1"/>
  <path d="M981 279 h14 M981 283 h14" stroke="#4a70c8" stroke-width="1.2"/>
  <path d="M982 273 l8 -6 l9 3 l-8 5 z" fill="#e8c050" stroke="#6a5010" stroke-width="1"/>
  <!-- object browser -->
  <path d="M1014 277 h20 v11 h-20 z" fill="#e8b828" stroke="#6a5010" stroke-width="1.2"/>
  <path d="M1012 277 l6 -4 h12 l6 4" fill="#f0d060" stroke="#6a5010" stroke-width="1"/>
  <circle cx="1015" cy="269" r="2.5" fill="#3050d0"/><path d="M1022 269 l6 -3 v6 z" fill="#30a030"/><rect x="1030" y="266" width="5" height="5" fill="#d02020"/>
  <!-- toolbox disabled -->
  <path d="M1050 285 l14 -14 M1053 270 l13 13" stroke="#c8c8c8" stroke-width="3"/>
  <circle cx="1065" cy="270" r="3" fill="none" stroke="#c8c8c8" stroke-width="2"/>
  <!-- help -->
  <circle cx="1098" cy="278" r="11.5" fill="#3a6fd0" stroke="#2a55a8" stroke-width="1"/>
  <path d="M1093.5 275 q0 -5 4.5 -5 q4.5 0 4.5 4 q0 3 -4 4.5 v2.5" fill="none" stroke="#fff" stroke-width="3"/>
  <rect x="1096.3" y="283" width="3.4" height="3.4" fill="#fff"/>
  <!-- disabled window icon -->
  <rect x="1215" y="266" width="14" height="14" fill="#e4e4e4" stroke="#d0d0d0"/>
  <rect x="1222" y="273" width="14" height="14" fill="#e4e4e4" stroke="#d0d0d0"/>

  <!-- toolbar 2 icons -->
  <path d="M508 309 l8 7 l-8 7 z" fill="#1a9a2a"/>
  <rect x="540" y="309" width="4.5" height="14" fill="#4a78d8" stroke="#24448a" stroke-width=".8"/>
  <rect x="547" y="309" width="4.5" height="14" fill="#4a78d8" stroke="#24448a" stroke-width=".8"/>
  <rect x="573" y="309.5" width="13.5" height="13.5" fill="#4a78d8" stroke="#24448a" stroke-width="1"/>
  <!-- hand -->
  <g id="hand">
    <g stroke="#9a7818" stroke-linecap="round" stroke-width="4.2" fill="none">
      <path d="M616.6 310 v7 M620.2 307.2 v9 M623.8 308 v8 M627.3 310.5 v7 M612.3 315.8 l4 4.5"/>
    </g>
    <rect x="614.5" y="314" width="14.8" height="11" rx="4.5" fill="#f0cc58" stroke="#9a7818" stroke-width="1"/>
    <g stroke="#f0cc58" stroke-linecap="round" stroke-width="2.4" fill="none">
      <path d="M616.6 310 v8 M620.2 307.2 v10 M623.8 308 v9 M627.3 310.5 v8 M612.3 315.8 l4 4.5"/>
    </g>
    <path d="M618.4 312 v4 M622 311 v5 M625.5 312 v4" stroke="#c8a030" stroke-width=".7"/>
  </g>
  <use href="#hand" x="595" y="0"/>
  <!-- indent icon -->
  <path d="M653 308.5 h12 M658 311.7 h7 M658 314.8 h7 M658 317.9 h7 M653.5 321 h11.5" stroke="#1a1a1a" stroke-width="1.6"/>
  <path d="M653.5 306 q-9 -1.5 -9 4 q0 4 7 4.5" stroke="#3a70d0" stroke-width="2.2" fill="none"/>
  <path d="M649.5 311 l5 3.5 l-5 3 z" fill="#3a70d0"/>
  <path d="M685.5 305.5 h-6.5 v18 q0 2 3 2 h3" stroke="#c8c8c8" stroke-width="1.5" fill="none"/>
  <path d="M684 322.5 l4 2.8 l-4 2.8 z" fill="#c8c8c8"/>
  <path d="M688 307.4 h11 M692 310.3 h7 M692 313.2 h7 M692 316.1 h7 M688 319 h11" stroke="#c8c8c8" stroke-width="1.5"/>
  <path d="M720 309 h-6.5 q-2 0 -2 2 v3 h9" stroke="#c8c8c8" stroke-width="1.5" fill="none"/>
  <path d="M718 306 l4.5 3 l-4.5 3 z" fill="#c8c8c8"/>
  <path d="M722 311.8 h11 M726 314.9 h7 M726 318 h7 M726 321 h7 M722 324 h11" stroke="#c8c8c8" stroke-width="1.5"/>
  <!-- immediate / locals / watch -->
  <rect x="752" y="306.5" width="21" height="18" fill="#e6eefa" stroke="#2a4a8a" stroke-width="1.2"/>
  <rect x="752" y="306.5" width="21" height="3" fill="#4a7ad8"/>
  <path d="M755 314 h6 M755 318 h6 M763 314 h6" stroke="#333" stroke-width="1"/>
  <rect x="787" y="306.5" width="22" height="18" fill="#e6eefa" stroke="#2a4a8a" stroke-width="1.2"/>
  <rect x="787" y="306.5" width="22" height="3" fill="#4a7ad8"/>
  <path d="M792 314 h12 M792 318 h12" stroke="#333" stroke-width="1"/>
  <path d="M786 312 v7" stroke="#e02020" stroke-width="3"/><circle cx="786" cy="322" r="1.6" fill="#e02020"/>
  <rect x="822" y="305" width="20" height="18" fill="#e6eefa" stroke="#2a4a8a" stroke-width="1.2"/>
  <rect x="822" y="305" width="20" height="3" fill="#4a7ad8"/>
  <path d="M826 312 h12 M826 316 h12" stroke="#333" stroke-width="1"/>
  <g id="glasses"><circle cx="825" cy="325" r="3.8" fill="#3a6ad0" stroke="#111" stroke-width="1.3"/><circle cx="837" cy="325" r="3.8" fill="#3a6ad0" stroke="#111" stroke-width="1.3"/><path d="M828.5 324 h5" stroke="#111" stroke-width="1.5"/></g>
  <use href="#glasses" x="33" y="-6"/>
  <path d="M889 307 h8 v6 h7 v6 h6 v6 h-6" fill="none" stroke="#d0d0d0" stroke-width="1.4"/>
  <rect x="889" y="307" width="8" height="6" fill="#eee" stroke="#d0d0d0"/><rect x="896" y="313" width="8" height="6" fill="#eee" stroke="#d0d0d0"/><rect x="903" y="319" width="8" height="6" fill="#eee" stroke="#d0d0d0"/>
  <!-- edit toolbar -->
  <rect x="955" y="305.5" width="17" height="18" fill="#e6eefa" stroke="#2a4a8a" stroke-width="1.1"/>
  <rect x="955" y="305.5" width="17" height="3" fill="#4a7ad8"/>
  <path d="M958 313 h8 M958 317 h8" stroke="#333" stroke-width="1"/>
  <path d="M975 313 v10 l-3 -3 M975 323 l3 -3" stroke="#3a78d8" stroke-width="1.8" fill="none"/>
  <rect x="991" y="306.5" width="15" height="17" fill="#e6eefa" stroke="#2a4a8a" stroke-width="1.1"/>
  <path d="M999 316 v8 M996 321 l3 3 l3 -3" stroke="#3a78d8" stroke-width="1.8" fill="none"/>
  <path d="M1023 305 v14 l3 -3 l3 5 l2 -1 l-3 -5 h4 z" fill="#fff" stroke="#333" stroke-width="1"/>
  <rect x="1025" y="317.5" width="20" height="6.5" fill="#f0d040" stroke="#333" stroke-width="1.2"/>
  <rect x="1057" y="306" width="10" height="8" fill="#dde8f8" stroke="#555" stroke-width="1"/>
  <path d="M1063 309 v14 l3 -3 l3 5 l2 -1 l-3 -5 h4 z" fill="#fff" stroke="#333" stroke-width="1"/>
  <rect x="1066" y="318" width="14" height="6.5" fill="#f0d040" stroke="#333" stroke-width="1.2"/>
  <path d="M1102 312.6 h9 M1108 309.6 l3 3 l-3 3" stroke="#3a78d8" stroke-width="1.8" fill="none"/>
  <path d="M1091 321 l4.8 -11 l4.8 11 M1092.8 317.5 h6" stroke="#1a3a8a" stroke-width="1.8" fill="none"/>
  <path d="M1103 320.5 h1.2 M1106 320.5 h1.2 M1109 320.5 h1.2" stroke="#555" stroke-width="1"/>
  <g fill="#111"><rect x="1133" y="307" width="20" height="2.5"/><rect x="1140" y="312" width="13" height="2.5"/><rect x="1140" y="317" width="13" height="2.5"/><rect x="1133" y="322" width="20" height="2.5"/><rect x="1139" y="304" width="1" height="22"/></g>
  <path d="M1131 314 h7 M1135 312 l3 2 l-3 2" stroke="#3a78d8" stroke-width="1.6" fill="none"/>
  <g fill="#111"><rect x="1168" y="307" width="20" height="2.5"/><rect x="1175" y="312" width="13" height="2.5"/><rect x="1175" y="317" width="13" height="2.5"/><rect x="1168" y="322" width="20" height="2.5"/><rect x="1174" y="304" width="1" height="22"/></g>
  <path d="M1165 314 h7 M1168 312 l-3 2 l3 2" stroke="#3a78d8" stroke-width="1.6" fill="none"/>

  <!-- combo chevrons -->
  <path d="M827 350 l5.5 5.5 l5.5 -5.5" fill="none" stroke="#333" stroke-width="1.2"/>
  <path d="M1229 350 l5.5 5.5 l5.5 -5.5" fill="none" stroke="#333" stroke-width="1.2"/>
  <!-- scroll arrows -->
  <path d="M1240 395 l5 -5.5 l5 5.5" fill="none" stroke="#606060" stroke-width="2.6"/>
  <path d="M1240 691 l5 5.5 l5 -5.5" fill="none" stroke="#606060" stroke-width="2.6"/>
  <path d="M514.5 715 l-6.3 4.8 l6.3 4.8" fill="none" stroke="#606060" stroke-width="2.8"/>
  <path d="M1214.5 714.5 l6 5 l-6 5" fill="none" stroke="#606060" stroke-width="2.6"/>
  <g fill="#b0b0b0"><rect x="1251" y="719" width="3" height="3"/><rect x="1247" y="723" width="3" height="3"/><rect x="1251" y="723" width="3" height="3"/><rect x="1243" y="727" width="3" height="3"/><rect x="1247" y="727" width="3" height="3"/><rect x="1251" y="727" width="3" height="3"/></g>
  <!-- view buttons -->
  <path d="M454 714.5 h10 M457.2 716.5 h6.8 M454 718.5 h10" stroke="#000" stroke-width="1"/>
  <path d="M480.2 715.5 h9.8 M483 717.5 h7 M480.2 719.4 h9.8 M483 721.4 h7 M480.2 723.4 h9.8" stroke="#000" stroke-width="1"/>
</svg>

<div class="t" style="left:481.60px;top:192.56px;font-size:18px;line-height:18px;font-weight:normal;letter-spacing:-0.093px;color:#ffffff;">Microsoft Visual Basic for Applications - Vba Functions List.xlsm - [Mo...</div>
<div class="t" style="left:493.40px;top:234.41px;font-size:17px;line-height:17px;font-weight:normal;letter-spacing:-0.379px;color:#000;">File</div>
<div class="t" style="left:537.40px;top:234.41px;font-size:17px;line-height:17px;font-weight:normal;letter-spacing:0.077px;color:#000;">Edit</div>
<div class="t" style="left:586.00px;top:234.41px;font-size:17px;line-height:17px;font-weight:normal;letter-spacing:-0.154px;color:#000;">View</div>
<div class="t" style="left:640.20px;top:234.41px;font-size:17px;line-height:17px;font-weight:normal;letter-spacing:0.341px;color:#000;">Insert</div>
<div class="t" style="left:703.00px;top:234.41px;font-size:17px;line-height:17px;font-weight:normal;letter-spacing:0.517px;color:#000;">Format</div>
<div class="t" style="left:777.50px;top:234.41px;font-size:17px;line-height:17px;font-weight:normal;letter-spacing:1.015px;color:#000;">Debug</div>
<div class="t" style="left:849.40px;top:234.41px;font-size:17px;line-height:17px;font-weight:normal;letter-spacing:0.234px;color:#000;">Run</div>
<div class="t" style="left:899.00px;top:234.41px;font-size:17px;line-height:17px;font-weight:normal;letter-spacing:0.903px;color:#000;">Tools</div>
<div class="t" style="left:959.90px;top:234.41px;font-size:17px;line-height:17px;font-weight:normal;letter-spacing:0.952px;color:#000;">Add-Ins</div>
<div class="t" style="left:1041.80px;top:234.41px;font-size:17px;line-height:17px;font-weight:normal;letter-spacing:0.943px;color:#000;">Window</div>
<div class="t" style="left:1125.00px;top:234.41px;font-size:17px;line-height:17px;font-weight:normal;letter-spacing:0.831px;color:#000;">Help</div>
<div class="t" style="left:458.00px;top:345.70px;font-size:15px;line-height:15px;font-weight:bold;letter-spacing:0.343px;color:#000;">(General)</div>
<div class="t" style="left:860.00px;top:345.70px;font-size:15px;line-height:15px;font-weight:bold;letter-spacing:0.773px;color:#000;">example_DATE</div>
<div class="t" style="left:488.50px;top:373.91px;font-size:32px;line-height:32px;font-weight:normal;letter-spacing:0.190px;color:#00007f;-webkit-text-stroke:0.5px #fff;paint-order:normal;">Option Explicit</div>
<div class="t" style="left:489.50px;top:448.11px;font-size:32px;line-height:32px;font-weight:normal;letter-spacing:-2.220px;color:#00007f;-webkit-text-stroke:0.5px #fff;paint-order:normal;">Sub</div>
<div class="t" style="left:550.30px;top:448.11px;font-size:32px;line-height:32px;font-weight:normal;letter-spacing:-0.667px;color:#000;-webkit-text-stroke:0.5px #fff;paint-order:normal;">example_DATE()</div>
<div class="t" style="left:525.00px;top:521.91px;font-size:32px;line-height:32px;font-weight:normal;letter-spacing:-1.859px;color:#000;-webkit-text-stroke:0.5px #fff;paint-order:normal;">Range(</div>
<div class="t" style="left:625.00px;top:521.91px;font-size:32px;line-height:32px;font-weight:normal;letter-spacing:0.000px;color:#000;-webkit-text-stroke:0.5px #fff;paint-order:normal;">&quot;</div>
<div class="t" style="left:636.60px;top:521.91px;font-size:32px;line-height:32px;font-weight:normal;letter-spacing:0.000px;color:#000;-webkit-text-stroke:0.5px #fff;paint-order:normal;">B</div>
<div class="t" style="left:660.00px;top:521.91px;font-size:32px;line-height:32px;font-weight:normal;letter-spacing:0.000px;color:#000;-webkit-text-stroke:0.5px #fff;paint-order:normal;">1</div>
<div class="t" style="left:679.00px;top:521.91px;font-size:32px;line-height:32px;font-weight:normal;letter-spacing:0.000px;color:#000;-webkit-text-stroke:0.5px #fff;paint-order:normal;">&quot;</div>
<div class="t" style="left:691.00px;top:521.91px;font-size:32px;line-height:32px;font-weight:normal;letter-spacing:0.000px;color:#000;-webkit-text-stroke:0.5px #fff;paint-order:normal;">)</div>
<div class="t" style="left:709.00px;top:521.91px;font-size:32px;line-height:32px;font-weight:normal;letter-spacing:0.000px;color:#000;-webkit-text-stroke:0.5px #fff;paint-order:normal;">=</div>
<div class="t" style="left:738.70px;top:521.91px;font-size:32px;line-height:32px;font-weight:normal;letter-spacing:-0.033px;color:#000;-webkit-text-stroke:0.5px #fff;paint-order:normal;">DateAdd(</div>
<div class="t" style="left:878.40px;top:521.91px;font-size:32px;line-height:32px;font-weight:normal;letter-spacing:0.000px;color:#000;-webkit-text-stroke:0.5px #fff;paint-order:normal;">&quot;</div>
<div class="t" style="left:891.00px;top:521.91px;font-size:32px;line-height:32px;font-weight:normal;letter-spacing:-2.677px;color:#000;-webkit-text-stroke:0.5px #fff;paint-order:normal;">YYYY</div>
<div class="t" style="left:968.00px;top:521.91px;font-size:32px;line-height:32px;font-weight:normal;letter-spacing:0.000px;color:#000;-webkit-text-stroke:0.5px #fff;paint-order:normal;">&quot;</div>
<div class="t" style="left:979.00px;top:521.91px;font-size:32px;line-height:32px;font-weight:normal;letter-spacing:0.000px;color:#000;-webkit-text-stroke:0.5px #fff;paint-order:normal;">,</div>
<div class="t" style="left:997.50px;top:521.91px;font-size:32px;line-height:32px;font-weight:normal;letter-spacing:-0.497px;color:#000;-webkit-text-stroke:0.5px #fff;paint-order:normal;">2,</div>
<div class="t" style="left:1033.00px;top:521.91px;font-size:32px;line-height:32px;font-weight:normal;letter-spacing:-1.139px;color:#000;-webkit-text-stroke:0.5px #fff;paint-order:normal;">Range(</div>
<div class="t" style="left:1136.00px;top:521.91px;font-size:32px;line-height:32px;font-weight:normal;letter-spacing:0.000px;color:#000;-webkit-text-stroke:0.5px #fff;paint-order:normal;">&quot;</div>
<div class="t" style="left:1145.70px;top:521.91px;font-size:32px;line-height:32px;font-weight:normal;letter-spacing:0.000px;color:#000;-webkit-text-stroke:0.5px #fff;paint-order:normal;">A</div>
<div class="t" style="left:1175.80px;top:521.91px;font-size:32px;line-height:32px;font-weight:normal;letter-spacing:0.000px;color:#000;-webkit-text-stroke:0.5px #fff;paint-order:normal;">1</div>
<div class="t" style="left:1187.00px;top:521.91px;font-size:32px;line-height:32px;font-weight:normal;letter-spacing:0.000px;color:#000;-webkit-text-stroke:0.5px #fff;paint-order:normal;">&quot;</div>
<div class="t" style="left:1199.60px;top:521.91px;font-size:32px;line-height:32px;font-weight:normal;letter-spacing:-2.256px;color:#000;-webkit-text-stroke:0.5px #fff;paint-order:normal;">))</div>
<div class="t" style="left:488.50px;top:595.31px;font-size:32px;line-height:32px;font-weight:normal;letter-spacing:-1.028px;color:#00007f;-webkit-text-stroke:0.5px #fff;paint-order:normal;">End Sub</div>
<div class="a" style="left:0;top:0;width:1269px;height:7px;background:#000"></div>
<div class="a" style="left:0;top:737px;width:1269px;height:7px;background:#000"></div>
<div class="a" style="left:0;top:0;width:7px;height:744px;background:#000"></div>
<div class="a" style="left:1262px;top:0;width:7px;height:744px;background:#000"></div>

</body></html>
